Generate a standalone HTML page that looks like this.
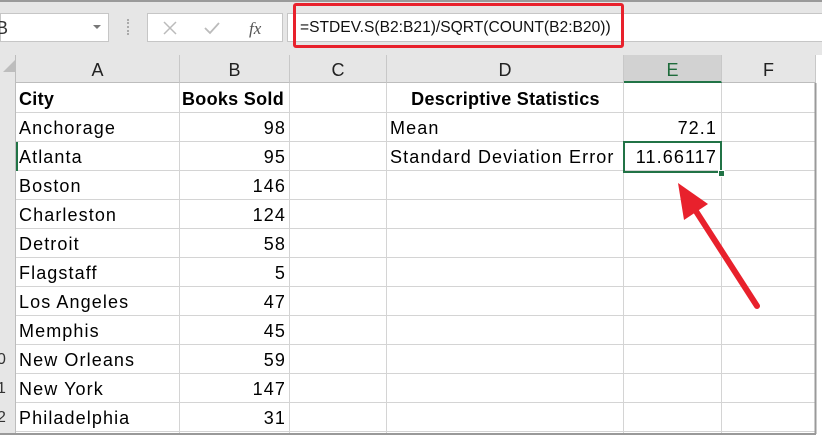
<!DOCTYPE html>
<html><head><style>
body{margin:0;width:822px;height:437px;overflow:hidden;background:#fff;font-family:"Liberation Sans",Carlito,sans-serif;position:relative}
.a{position:absolute}
.t{position:absolute;font-size:18px;letter-spacing:1.1px;line-height:30px;white-space:nowrap;color:#000}
.b{font-weight:bold;letter-spacing:0.3px}
.h{position:absolute;top:55px;height:28px;line-height:30px;font-size:18px;text-align:center;color:#222;background:#e6e6e6;border-right:1px solid #c8c8c8;box-sizing:border-box;border-bottom:1px solid #bdbdbd}
</style></head><body>
<div class="a" style="left:0;top:0;width:822px;height:55px;background:#e6e6e6"></div>
<div class="a" style="left:0;top:0;width:822px;height:2px;background:#9a9a9a"></div>
<div class="a" style="left:0;top:13px;width:109px;height:29px;background:#fff;border:1px solid #c6c6c6;box-sizing:border-box"></div>
<div class="t" style="left:-4px;top:13px;color:#333">B</div>
<div class="a" style="left:93px;top:25px;border-left:4px solid transparent;border-right:4px solid transparent;border-top:4px solid #777"></div>
<div class="a" style="left:127px;top:19px;width:2px;height:16px;border-left:2px dotted #aaa"></div>
<div class="a" style="left:147px;top:13px;width:136px;height:29px;background:#fff;border:1px solid #c6c6c6;box-sizing:border-box"></div>
<svg class="a" style="left:160px;top:18px" width="120" height="20"><path d="M4 4L16 16M16 4L4 16" stroke="#bbb" stroke-width="1.5"/><path d="M45 10L50 15L59 5" stroke="#bbb" stroke-width="1.8" fill="none"/><text x="89" y="16" font-family="Liberation Serif" font-style="italic" font-size="17" fill="#555">fx</text></svg>
<div class="a" style="left:287px;top:13px;width:535px;height:29px;background:#fff;border-top:1px solid #c6c6c6;border-left:1px solid #c6c6c6;border-bottom:1px solid #c6c6c6;box-sizing:border-box"></div>
<div class="t" style="left:300px;top:13px;font-size:15.6px;letter-spacing:0;color:#111">=STDEV.S(B2:B21)/SQRT(COUNT(B2:B20))</div>
<div class="a" style="left:293px;top:3px;width:331px;height:45px;border:3px solid #e8212c;border-radius:3px;box-sizing:border-box"></div>
<div class="a" style="left:0;top:55px;width:16px;height:382px;background:#e6e6e6;border-right:1px solid #bdbdbd;box-sizing:border-box"></div>
<div class="a" style="left:3px;top:60px;border-left:12px solid transparent;border-bottom:12px solid #bdbdbd"></div>
<div class="h" style="left:16px;width:164px">A</div>
<div class="h" style="left:180px;width:110px">B</div>
<div class="h" style="left:290px;width:97px">C</div>
<div class="h" style="left:387px;width:237px">D</div>
<div class="h" style="left:624px;width:98px;background:#d2d2d2;color:#1e6b3b;border-bottom:2px solid #217346">E</div>
<div class="h" style="left:722px;width:94px">F</div>
<svg class="a" style="left:16px;top:83px" width="806" height="354">
<g stroke="#d4d4d4" stroke-width="1">
<line x1="0" y1="29.5" x2="800" y2="29.5"/><line x1="0" y1="58.5" x2="800" y2="58.5"/><line x1="0" y1="87.5" x2="800" y2="87.5"/><line x1="0" y1="116.5" x2="800" y2="116.5"/><line x1="0" y1="145.5" x2="800" y2="145.5"/><line x1="0" y1="174.5" x2="800" y2="174.5"/><line x1="0" y1="203.5" x2="800" y2="203.5"/><line x1="0" y1="232.5" x2="800" y2="232.5"/><line x1="0" y1="261.5" x2="800" y2="261.5"/><line x1="0" y1="290.5" x2="800" y2="290.5"/><line x1="0" y1="319.5" x2="800" y2="319.5"/><line x1="0" y1="348.5" x2="800" y2="348.5"/>
<line x1="163.5" y1="0" x2="163.5" y2="354"/><line x1="273.5" y1="0" x2="273.5" y2="354"/><line x1="370.5" y1="0" x2="370.5" y2="354"/><line x1="607.5" y1="0" x2="607.5" y2="354"/><line x1="705.5" y1="0" x2="705.5" y2="354"/>
</g>
<line x1="799.5" y1="0" x2="799.5" y2="354" stroke="#999" stroke-width="2"/>
<line x1="0" y1="352" x2="806" y2="352" stroke="#999" stroke-width="2"/>
</svg>
<div class="a" style="left:0;top:434px;width:822px;height:3px;background:#fff"></div>
<div class="a" style="left:0;top:433px;width:816px;height:2px;background:#999"></div>
<div class="t b" style="left:19px;top:84px">City</div>
<div class="t b" style="left:180px;width:104px;top:84px;text-align:right">Books Sold</div>
<div class="t b" style="left:387px;width:237px;top:84px;text-align:center">Descriptive Statistics</div>
<div class="t" style="left:390px;top:113px">Mean</div>
<div class="t" style="left:624px;width:93px;top:113px;text-align:right">72.1</div>
<div class="t" style="left:390px;top:142px">Standard Deviation Error</div>
<div class="a" style="left:623px;top:141px;width:99px;height:32px;border:2px solid #217346;box-sizing:border-box"></div>
<div class="a" style="left:718px;top:170px;width:5px;height:5px;background:#217346;border:1px solid #fff"></div>
<div class="t" style="left:624px;width:93px;top:142px;text-align:right">11.66117</div>
<div class="t" style="left:19px;top:113px">Anchorage</div><div class="t" style="left:180px;width:106px;top:113px;text-align:right">98</div>
<div class="t" style="left:19px;top:142px">Atlanta</div><div class="t" style="left:180px;width:106px;top:142px;text-align:right">95</div>
<div class="t" style="left:19px;top:171px">Boston</div><div class="t" style="left:180px;width:106px;top:171px;text-align:right">146</div>
<div class="t" style="left:19px;top:200px">Charleston</div><div class="t" style="left:180px;width:106px;top:200px;text-align:right">124</div>
<div class="t" style="left:19px;top:229px">Detroit</div><div class="t" style="left:180px;width:106px;top:229px;text-align:right">58</div>
<div class="t" style="left:19px;top:258px">Flagstaff</div><div class="t" style="left:180px;width:106px;top:258px;text-align:right">5</div>
<div class="t" style="left:19px;top:287px">Los Angeles</div><div class="t" style="left:180px;width:106px;top:287px;text-align:right">47</div>
<div class="t" style="left:19px;top:316px">Memphis</div><div class="t" style="left:180px;width:106px;top:316px;text-align:right">45</div>
<div class="t" style="left:19px;top:345px">New Orleans</div><div class="t" style="left:180px;width:106px;top:345px;text-align:right">59</div>
<div class="t" style="left:19px;top:374px">New York</div><div class="t" style="left:180px;width:106px;top:374px;text-align:right">147</div>
<div class="t" style="left:19px;top:403px">Philadelphia</div><div class="t" style="left:180px;width:106px;top:403px;text-align:right">31</div>
<div class="t" style="left:-3px;top:345px;font-size:16px;letter-spacing:0;color:#333">0</div>
<div class="t" style="left:-3px;top:374px;font-size:16px;letter-spacing:0;color:#333">1</div>
<div class="t" style="left:-3px;top:403px;font-size:16px;letter-spacing:0;color:#333">2</div>
<div class="a" style="left:16px;top:142px;width:2px;height:29px;background:#217346"></div>
<svg class="a" style="left:0;top:0" width="822" height="437"><line x1="757" y1="306" x2="692" y2="205" stroke="#e8212c" stroke-width="6" stroke-linecap="round"/><polygon points="678,183 684,220 708,204" fill="#e8212c"/></svg>
</body></html>
